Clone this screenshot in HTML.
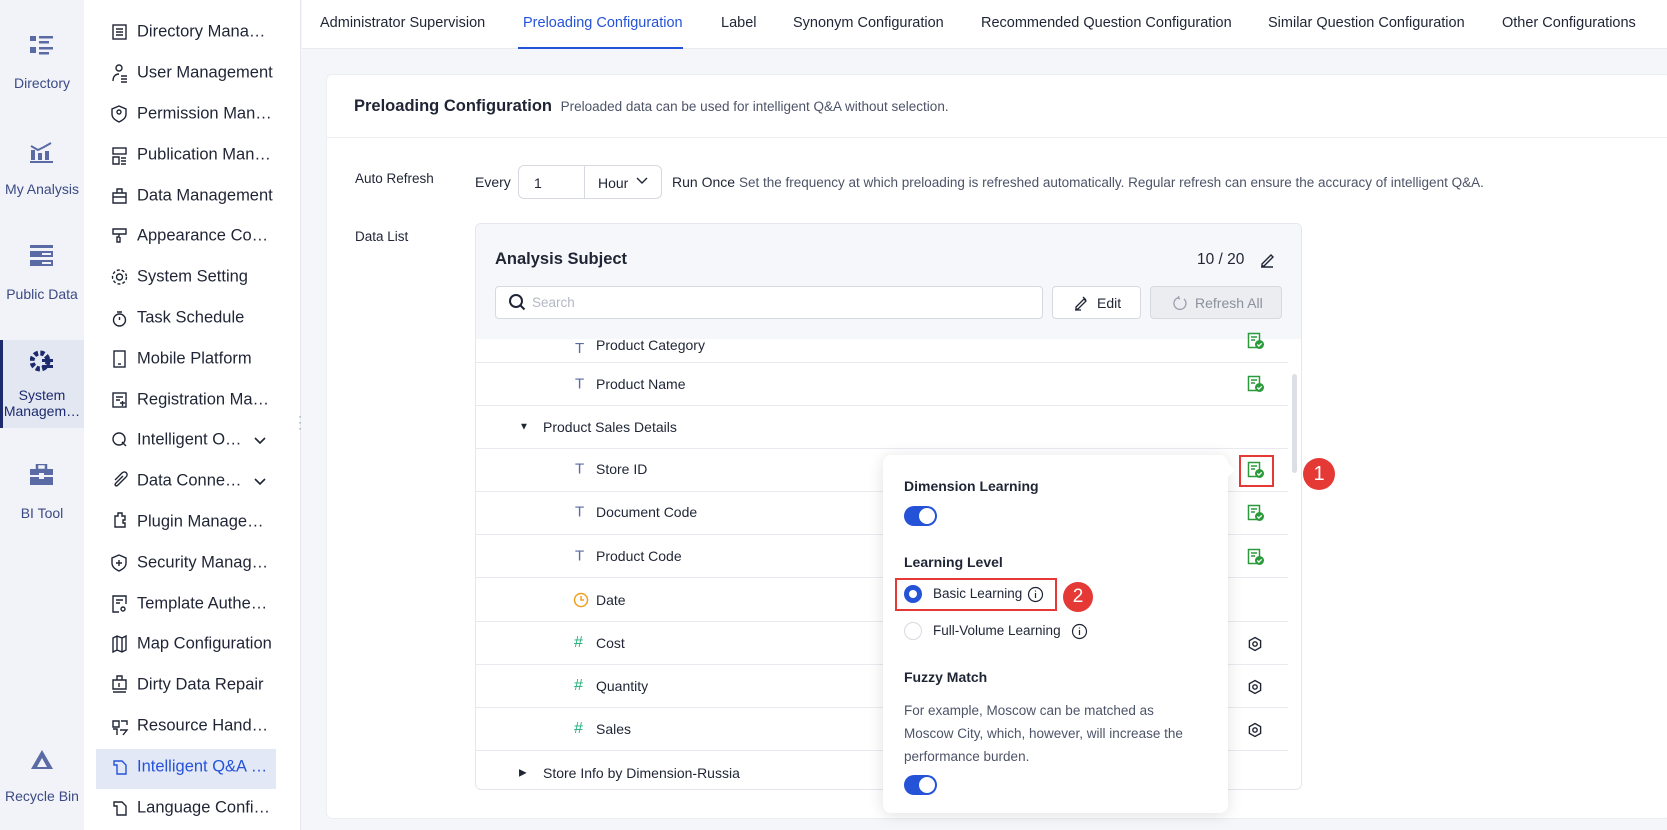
<!DOCTYPE html>
<html><head><meta charset="utf-8"><style>
*{box-sizing:border-box;margin:0;padding:0}
body{width:1667px;height:830px;position:relative;overflow:hidden;font-family:"Liberation Sans",sans-serif;background:#f5f6f9;color:#1f2535}
.a{position:absolute;white-space:nowrap}
.rail{left:0;top:0;width:84px;height:830px;background:#f1f3f8}
.rl{width:84px;text-align:center;font-size:14px;color:#3b4a84}
.sub{left:84px;top:0;width:217px;height:830px;background:#fff;border-right:1px solid #e6e8ee}
.mi{left:137px;font-size:16.5px;color:#1f2535;transform:translateY(-50%)}
.tab{top:15px;font-size:14.5px;color:#1f2535}
.rt{font-size:14px;color:#1f2535;transform:translateY(-50%)}
.T{color:#5a6aa5;font-size:15px;transform:translateY(-50%)}
</style></head><body>
<div class="a rail"></div>
<svg class="a" style="left:30px;top:36px" width="24" height="20"><g fill="#5a6aa5"><rect x="0" y="0" width="6" height="5"/><rect x="9" y="0" width="14" height="2.5"/><rect x="9" y="5" width="10" height="2.5"/><rect x="0" y="11" width="6" height="6"/><rect x="9" y="11" width="14" height="2.5"/><rect x="9" y="16" width="10" height="2.5"/></g></svg>
<div class="a rl" style="top:75px">Directory</div>
<svg class="a" style="left:30px;top:140px" width="24" height="24"><g fill="#5a6aa5"><rect x="1" y="10" width="4" height="10"/><rect x="8" y="13" width="4" height="7"/><rect x="15" y="11" width="4" height="9"/><rect x="0" y="21" width="23" height="2"/></g><polyline points="1,6 8,10 14,7 21,3" stroke="#5a6aa5" stroke-width="2" fill="none"/></svg>
<div class="a rl" style="top:181px">My Analysis</div>
<svg class="a" style="left:30px;top:245px" width="24" height="22"><g fill="#5a6aa5"><rect x="0" y="0" width="23" height="3"/><rect x="0" y="6" width="23" height="6"/><rect x="0" y="15" width="23" height="6"/></g><g fill="#f1f3f8"><rect x="12" y="8" width="9" height="2"/><rect x="12" y="17" width="9" height="2"/></g></svg>
<div class="a rl" style="top:286px">Public Data</div>
<div class="a" style="left:0;top:340px;width:84px;height:88px;background:#e3e7f1;border-left:3px solid #1d2a6e"></div>
<svg class="a" style="left:30px;top:350px" width="24" height="24"><circle cx="10" cy="11" r="8" fill="none" stroke="#1d2a6e" stroke-width="5" stroke-dasharray="4 2.3"/><rect x="12" y="9" width="11" height="3" fill="#1d2a6e"/><rect x="12" y="15" width="11" height="3" fill="#1d2a6e"/></svg>
<div class="a rl" style="top:387px;color:#1d2a6e;line-height:16px">System<br>Managem…</div>
<svg class="a" style="left:30px;top:464px" width="24" height="22"><rect x="0" y="5" width="23" height="16" fill="#5a6aa5"/><rect x="7" y="0" width="9" height="6" fill="none" stroke="#5a6aa5" stroke-width="2.5"/><rect x="0" y="11" width="23" height="2" fill="#f1f3f8"/><rect x="9" y="9" width="5" height="6" fill="#f1f3f8"/></svg>
<div class="a rl" style="top:505px">BI Tool</div>
<svg class="a" style="left:30px;top:749px" width="24" height="22"><polygon points="12,1 23,20 1,20" fill="#5a6aa5"/><polygon points="12,9 17,18 7,18" fill="#f1f3f8"/></svg>
<div class="a rl" style="top:788px">Recycle Bin</div>

<div class="a sub"></div>
<div class="a" style="left:96px;top:749px;width:180px;height:40px;background:#e3e8f7"></div>
<div class="a mi" style="top:32px">Directory Mana…</div>
<div class="a mi" style="top:73px">User Management</div>
<div class="a mi" style="top:114px">Permission Man…</div>
<div class="a mi" style="top:155px">Publication Man…</div>
<div class="a mi" style="top:196px">Data Management</div>
<div class="a mi" style="top:236px">Appearance Co…</div>
<div class="a mi" style="top:277px">System Setting</div>
<div class="a mi" style="top:318px">Task Schedule</div>
<div class="a mi" style="top:359px">Mobile Platform</div>
<div class="a mi" style="top:400px">Registration Ma…</div>
<div class="a mi" style="top:440px">Intelligent O…</div>
<div class="a mi" style="top:481px">Data Conne…</div>
<div class="a mi" style="top:522px">Plugin Manage…</div>
<div class="a mi" style="top:563px">Security Manag…</div>
<div class="a mi" style="top:604px">Template Authe…</div>
<div class="a mi" style="top:644px">Map Configuration</div>
<div class="a mi" style="top:685px">Dirty Data Repair</div>
<div class="a mi" style="top:726px">Resource Hand…</div>
<div class="a mi" style="top:767px;color:#2553d8">Intelligent Q&amp;A …</div>
<div class="a mi" style="top:808px">Language Confi…</div>
<svg class="a" style="left:110px;top:0" width="20" height="830" fill="none" stroke="#1f2535" stroke-width="1.4">
<rect x="3" y="25" width="13" height="14"/><path d="M6 29h7M6 32h7M6 35h7"/>
<circle cx="9" cy="68" r="3"/><path d="M3 81c0-5 3-7 6-7M11 76h6M11 79h6M11 82h6"/>
<path d="M9 106l7 3v5c0 4-3 6-7 8-4-2-7-4-7-8v-5z"/><circle cx="9" cy="112" r="2"/>
<rect x="3" y="148" width="13" height="6"/><path d="M3 157h6v7H3zM11 158h5M11 161h5M11 164h5"/>
<path d="M3 193h13v10H3zM7 193v-4h5v4M3 197h13"/>
<path d="M3 229h13v5H3zM9 234v3h-2v5h3v-5"/>
<circle cx="9.5" cy="277" r="3"/><circle cx="9.5" cy="277" r="7" stroke-dasharray="3 2"/>
<circle cx="9.5" cy="320" r="6"/><path d="M9.5 320v-3M7 312h5"/>
<rect x="4" y="351" width="11" height="16"/><path d="M8 364h3"/>
<rect x="3" y="393" width="13" height="14"/><path d="M6 397h7M6 400h4M10 403h5M12.5 401v5"/>
<circle cx="9" cy="439" r="6"/><path d="M12 442l4 4"/>
<path d="M13 476l-7 7c-2 2 0 4 2 2l8-8c3-3-1-7-4-4l-7 7"/>
<path d="M5 516h3v-3h4v3h3v4h-2v3h2v4H5z"/>
<path d="M9 555l7 3v5c0 4-3 6-7 8-4-2-7-4-7-8v-5zM9 560v6M6 563h6"/>
<path d="M16 604V596H3v16h6M6 600h7M6 603h4"/><circle cx="13" cy="609" r="2"/>
<path d="M3 638l4-2 5 2 4-2v14l-4 2-5-2-4 2zM7 636v14M12 638v14"/>
<path d="M3 680h13v9H3zM7 680v-4h5v4M3 692h13M9 683v4"/>
<path d="M3 721h6v6H3zM11 721h6v4M3 729h4v6M10 730h7l-4 5"/>
<path d="M4 761h8l4 4v9H7V765H4z" stroke="#2553d8"/>
<path d="M4 802h8l4 4v9H7V806H4z"/>
</svg>
<svg class="a" style="left:253px;top:435px" width="14" height="50" fill="none" stroke="#1f2535" stroke-width="1.6"><path d="M2 3l5 5 5-5M2 44l5 5 5-5"/></svg>
<div class="a" style="left:298px;top:413px;font-size:12px;color:#8890a5;line-height:6px">·<br>·<br>·</div>

<div class="a" style="left:302px;top:0;width:1365px;height:49px;background:#fff;border-bottom:1px solid #e8eaef"></div>
<div class="a tab" style="left:320px">Administrator Supervision</div>
<div class="a tab" style="left:523px;color:#2553d8">Preloading Configuration</div>
<div class="a" style="left:518px;top:47px;width:165px;height:2px;background:#2553d8"></div>
<div class="a tab" style="left:721px">Label</div>
<div class="a tab" style="left:793px">Synonym Configuration</div>
<div class="a tab" style="left:981px">Recommended Question Configuration</div>
<div class="a tab" style="left:1268px">Similar Question Configuration</div>
<div class="a tab" style="left:1502px">Other Configurations</div>

<div class="a" style="left:326px;top:74px;width:1345px;height:745px;background:#fff;border-radius:6px;border:1px solid #eceef2"></div>
<div class="a" style="left:326px;top:137px;width:1341px;height:1px;background:#eceef2"></div>
<div class="a" style="left:354px;top:97px;font-size:16.5px;font-weight:bold;color:#1f2535">Preloading Configuration <span style="font-weight:normal;font-size:13.5px;color:#4d5468;margin-left:4px">Preloaded data can be used for intelligent Q&amp;A without selection.</span></div>
<div class="a" style="left:355px;top:171px;font-size:13.5px">Auto Refresh</div>
<div class="a" style="left:475px;top:174px;font-size:14px">Every</div>
<div class="a" style="left:518px;top:165px;width:144px;height:34px;border:1px solid #d6d9e0;border-radius:6px;background:#fff"></div>
<div class="a" style="left:584px;top:166px;width:1px;height:32px;background:#d6d9e0"></div>
<div class="a" style="left:534px;top:175px;font-size:14px">1</div>
<div class="a" style="left:598px;top:175px;font-size:14px">Hour</div>
<svg class="a" style="left:636px;top:176px" width="12" height="10"><path d="M1 2l5 5 5-5" fill="none" stroke="#1f2535" stroke-width="1.4"/></svg>
<div class="a" style="left:672px;top:174px;font-size:14px">Run Once <span style="color:#4d5468;font-size:13.5px">Set the frequency at which preloading is refreshed automatically. Regular refresh can ensure the accuracy of intelligent Q&amp;A.</span></div>
<div class="a" style="left:355px;top:229px;font-size:13.5px">Data List</div>

<div class="a" style="left:475px;top:223px;width:827px;height:567px;border:1px solid #e4e7ed;border-radius:6px;background:#fff;overflow:hidden">
<div style="position:absolute;left:0;top:0;width:827px;height:115px;background:#f6f7fa"></div>
</div>
<div class="a" style="left:495px;top:250px;font-size:16.5px;font-weight:bold;color:#1f2535">Analysis Subject</div>
<div class="a" style="left:1197px;top:251px;font-size:15.5px">10 / 20</div>
<svg class="a" style="left:1259px;top:252px" width="16" height="16" fill="none" stroke="#1f2535" stroke-width="1.4"><path d="M3 12l9-9 2 2-9 9H3zM2 15h12"/></svg>
<div class="a" style="left:495px;top:286px;width:548px;height:33px;border:1px solid #d6d9e0;border-radius:4px;background:#fff"></div>
<svg class="a" style="left:508px;top:293px" width="18" height="18" fill="none" stroke="#1f2535" stroke-width="2"><circle cx="8" cy="8" r="6"/><path d="M12.5 12.5l4 4"/></svg>
<div class="a" style="left:532px;top:295px;font-size:13.5px;color:#b4b8c3">Search</div>
<div class="a" style="left:1052px;top:286px;width:89px;height:33px;border:1px solid #d6d9e0;border-radius:4px;background:#fff"></div>
<svg class="a" style="left:1073px;top:295px" width="16" height="16" fill="none" stroke="#1f2535" stroke-width="1.3"><path d="M3 12l8-8 2 2-8 8H3zM2 15h6M10 2l3 3"/></svg>
<div class="a" style="left:1097px;top:295px;font-size:14px">Edit</div>
<div class="a" style="left:1150px;top:286px;width:132px;height:33px;border:1px solid #d6d9e0;border-radius:4px;background:#ebedf1"></div>
<svg class="a" style="left:1172px;top:295px" width="16" height="16" fill="none" stroke="#9aa0ad" stroke-width="1.3"><path d="M12 4a6 6 0 1 1-5-1.5"/><path d="M7 1l-1 2 2 1"/></svg>
<div class="a" style="left:1195px;top:295px;font-size:14px;color:#8a909c">Refresh All</div>

<div class="a" style="left:476px;top:338px;width:812px;height:24px;overflow:hidden"><div class="a T" style="left:99px;top:2px;transform:none;font-size:15px">T</div><div class="a" style="left:120px;top:-1px;font-size:14px">Product Category</div></div>
<div class="a" style="left:476px;top:362px;width:812px;height:1px;background:#e8eaef"></div>
<div class="a" style="left:476px;top:405px;width:812px;height:1px;background:#e8eaef"></div>
<div class="a" style="left:476px;top:448px;width:812px;height:1px;background:#e8eaef"></div>
<div class="a" style="left:476px;top:491px;width:812px;height:1px;background:#e8eaef"></div>
<div class="a" style="left:476px;top:534px;width:812px;height:1px;background:#e8eaef"></div>
<div class="a" style="left:476px;top:577px;width:812px;height:1px;background:#e8eaef"></div>
<div class="a" style="left:476px;top:621px;width:812px;height:1px;background:#e8eaef"></div>
<div class="a" style="left:476px;top:664px;width:812px;height:1px;background:#e8eaef"></div>
<div class="a" style="left:476px;top:707px;width:812px;height:1px;background:#e8eaef"></div>
<div class="a" style="left:476px;top:750px;width:812px;height:1px;background:#e8eaef"></div>

<div class="a T" style="left:575px;top:384px">T</div><div class="a rt" style="left:596px;top:384px">Product Name</div>
<div class="a rt" style="left:519px;top:427px;font-size:10px">▼</div><div class="a rt" style="left:543px;top:427px">Product Sales Details</div>
<div class="a T" style="left:575px;top:469px">T</div><div class="a rt" style="left:596px;top:469px">Store ID</div>
<div class="a T" style="left:575px;top:512px">T</div><div class="a rt" style="left:596px;top:512px">Document Code</div>
<div class="a T" style="left:575px;top:556px">T</div><div class="a rt" style="left:596px;top:556px">Product Code</div>
<svg class="a" style="left:573px;top:592px" width="16" height="16" fill="none" stroke="#f0a020" stroke-width="1.5"><circle cx="8" cy="8" r="6.5"/><path d="M8 4v4h3"/></svg><div class="a rt" style="left:596px;top:600px">Date</div>
<div class="a rt" style="left:574px;top:643px;color:#1fb07a;font-size:16px">#</div><div class="a rt" style="left:596px;top:643px">Cost</div>
<div class="a rt" style="left:574px;top:686px;color:#1fb07a;font-size:16px">#</div><div class="a rt" style="left:596px;top:686px">Quantity</div>
<div class="a rt" style="left:574px;top:729px;color:#1fb07a;font-size:16px">#</div><div class="a rt" style="left:596px;top:729px">Sales</div>
<div class="a rt" style="left:519px;top:773px;font-size:10px">▶</div><div class="a rt" style="left:543px;top:773px">Store Info by Dimension-Russia</div>

<svg width="0" height="0" style="position:absolute"><defs><g id="gk"><rect x="1.5" y="1.5" width="11" height="14" fill="#fff" stroke="#2a9a3a" stroke-width="1.5"/><path d="M4 5h6M4 8h4" stroke="#2a9a3a" stroke-width="1.4"/><circle cx="12.5" cy="12.5" r="4.5" fill="#2a9a3a"/><path d="M10.3 12.5l1.6 1.6 2.8-2.8" stroke="#fff" stroke-width="1.3" fill="none"/></g><g id="gs" fill="none" stroke="#1f2535" stroke-width="1.4"><path d="M8 1.5l5.6 3.2v6.6L8 14.5 2.4 11.3V4.7z"/><circle cx="8" cy="8" r="2.2"/></g></defs></svg>
<svg class="a" style="left:1247px;top:332px" width="18" height="18"><use href="#gk"/></svg>
<svg class="a" style="left:1247px;top:375px" width="18" height="18"><use href="#gk"/></svg>
<svg class="a" style="left:1247px;top:461px" width="18" height="18"><use href="#gk"/></svg>
<svg class="a" style="left:1247px;top:504px" width="18" height="18"><use href="#gk"/></svg>
<svg class="a" style="left:1247px;top:548px" width="18" height="18"><use href="#gk"/></svg>
<svg class="a" style="left:1247px;top:636px" width="16" height="16"><use href="#gs"/></svg>
<svg class="a" style="left:1247px;top:679px" width="16" height="16"><use href="#gs"/></svg>
<svg class="a" style="left:1247px;top:722px" width="16" height="16"><use href="#gs"/></svg>
<div class="a" style="left:1239px;top:455px;width:35px;height:32px;border:2px solid #e53935"></div>
<div class="a" style="left:1292px;top:374px;width:5px;height:99px;background:#dcdfe5;border-radius:3px"></div>
<div class="a" style="left:1303px;top:458px;width:32px;height:32px;border-radius:50%;background:#e53935;color:#fff;font-size:20px;text-align:center;line-height:32px">1</div>

<div class="a" style="left:883px;top:455px;width:345px;height:358px;background:#fff;border-radius:8px;box-shadow:0 2px 16px rgba(0,0,0,.12)"></div>
<div class="a" style="left:1223px;top:465px;width:10px;height:10px;background:#fff;transform:rotate(45deg)"></div>
<div class="a" style="left:904px;top:478px;font-size:14px;font-weight:bold">Dimension Learning</div>
<div class="a" style="left:904px;top:506px;width:33px;height:20px;border-radius:10px;background:#2553d8"><div style="position:absolute;right:2px;top:2px;width:16px;height:16px;border-radius:50%;background:#fff"></div></div>
<div class="a" style="left:904px;top:554px;font-size:14px;font-weight:bold">Learning Level</div>
<div class="a" style="left:904px;top:585px;width:18px;height:18px;border-radius:50%;background:#2553d8"><div style="position:absolute;left:5px;top:5px;width:8px;height:8px;border-radius:50%;background:#fff"></div></div>
<div class="a" style="left:933px;top:586px;font-size:13.5px">Basic Learning</div>
<svg class="a" style="left:1027px;top:586px" width="17" height="17" fill="none" stroke="#1f2535" stroke-width="1.2"><circle cx="8.5" cy="8.5" r="7"/><path d="M8.5 7v5M8.5 4.5v1"/></svg>
<div class="a" style="left:895px;top:578px;width:162px;height:33px;border:2px solid #e53935"></div>
<div class="a" style="left:1063px;top:582px;width:30px;height:30px;border-radius:50%;background:#e53935;color:#fff;font-size:19px;text-align:center;line-height:30px">2</div>
<div class="a" style="left:904px;top:622px;width:18px;height:18px;border-radius:50%;border:1px solid #d6d9e0"></div>
<div class="a" style="left:933px;top:623px;font-size:13.5px">Full-Volume Learning</div>
<svg class="a" style="left:1071px;top:623px" width="17" height="17" fill="none" stroke="#1f2535" stroke-width="1.2"><circle cx="8.5" cy="8.5" r="7"/><path d="M8.5 7v5M8.5 4.5v1"/></svg>
<div class="a" style="left:904px;top:669px;font-size:14px;font-weight:bold">Fuzzy Match</div>
<div class="a" style="left:904px;top:699px;font-size:13.5px;color:#4d5468;line-height:23px;white-space:normal;width:300px">For example, Moscow can be matched as Moscow City, which, however, will increase the performance burden.</div>
<div class="a" style="left:904px;top:775px;width:33px;height:20px;border-radius:10px;background:#2553d8"><div style="position:absolute;right:2px;top:2px;width:16px;height:16px;border-radius:50%;background:#fff"></div></div>
</body></html>
